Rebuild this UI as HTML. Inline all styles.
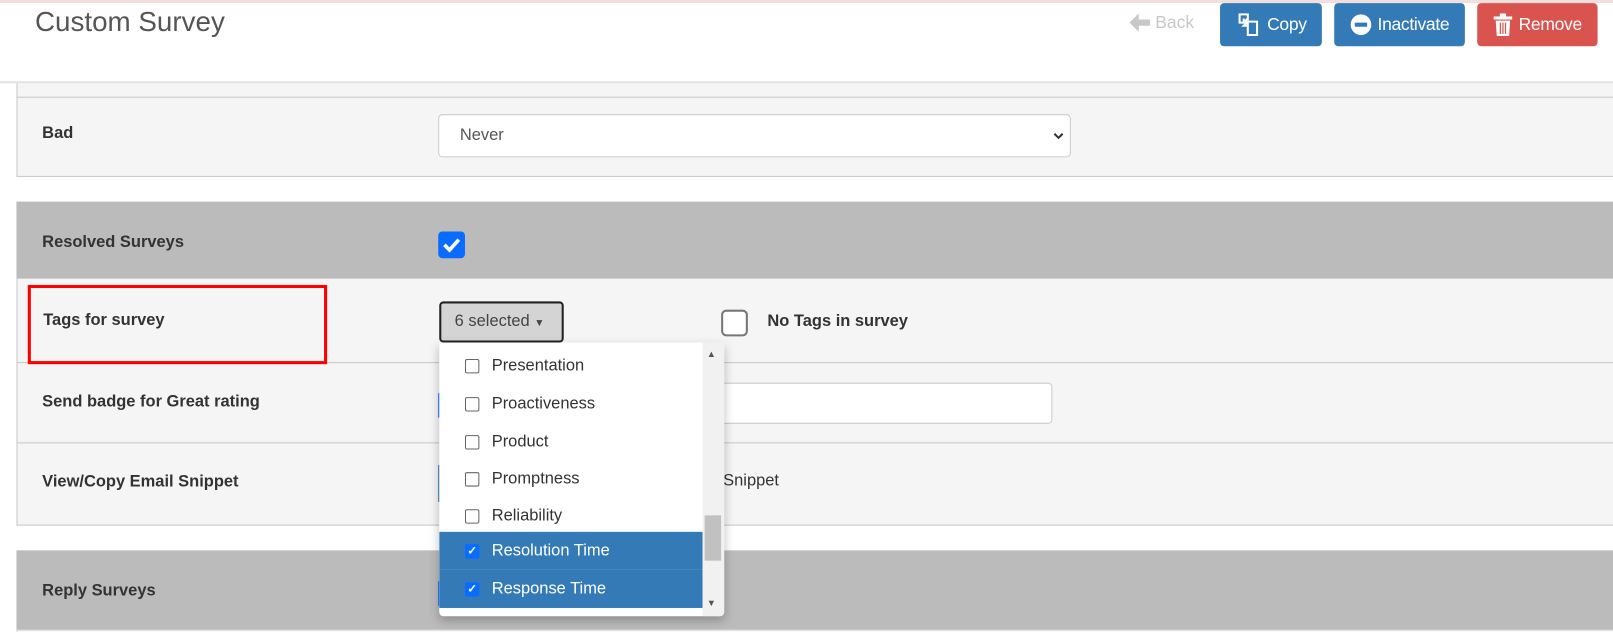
<!DOCTYPE html>
<html><head><style>
*{box-sizing:border-box;margin:0;padding:0}
html,body{width:1613px;height:632px;overflow:hidden;background:#fff}
#w{position:absolute;left:0;top:0;width:1568px;height:614px;transform:scale(1.0287);transform-origin:0 0;font-family:"Liberation Sans",Arial,sans-serif;color:#333;overflow:hidden}
.abs{position:absolute}
.lbl{position:absolute;left:41px;font-weight:bold;font-size:16px;color:#333}
.btn{position:absolute;top:3px;height:42px;border-radius:4px;color:#fff;font-size:17px;display:flex;align-items:center;justify-content:center;gap:5px;letter-spacing:-0.3px}
.item{position:absolute;left:0;width:256px;height:37px;font-size:16px;display:flex;align-items:center;padding-left:25px;color:#333}
.cb{width:14px;height:14px;border:1px solid #666;border-radius:2px;background:#fff;margin-right:12px}
.sel{background:#337ab7;color:#fff}
.sel .cb{background:#0a6cff;border-color:#0a6cff;color:#fff;font-size:11px;line-height:12px;text-align:center;font-weight:bold}
</style></head><body><div id="w">
<div class="abs" style="left:0;top:0;width:1568px;height:3px;background:#f3dede"></div>
<div class="abs" style="left:0;top:79px;width:1568px;height:2px;background:#e2e2e2"></div>
<div class="abs" style="left:34px;top:6px;font-size:27px;color:#555">Custom Survey</div>
<div class="abs" style="left:1097px;top:12px;font-size:17px;color:#c8c8c8;display:flex;align-items:center;gap:4px"><svg width="22" height="20" viewBox="0 0 22 20"><path d="M10 1 L1 10 L10 19 L10 13 L21 13 L21 7 L10 7 Z" fill="#c8c8c8"/></svg>Back</div>
<div class="btn" style="left:1186px;width:99px;background:#337ab7"><svg width="26" height="24" viewBox="0 0 26 24" fill="none" stroke="#fff" stroke-width="2"><path d="M4 2h8v4l-4 4H4z M8 6v4H4"/><path d="M12 9h9v13H12zM12 9l-4 4h4z"/></svg>Copy</div>
<div class="btn" style="left:1297px;width:127px;background:#337ab7"><svg width="22" height="22" viewBox="0 0 22 22"><circle cx="11" cy="11" r="10" fill="#fff"/><rect x="5" y="9" width="12" height="4" fill="#337ab7"/></svg>Inactivate</div>
<div class="btn" style="left:1436px;width:117px;background:#d9534f"><svg width="20" height="22" viewBox="0 0 20 22"><rect x="1" y="3" width="18" height="3" fill="#fff"/><rect x="7" y="0" width="6" height="3" fill="#fff"/><path d="M3 7h14l-1 15H4z" fill="#fff"/><path d="M7.5 9v11M10 9v11M12.5 9v11" stroke="#d9534f" stroke-width="1.2"/></svg>Remove</div>

<div class="abs" style="left:16px;top:81px;width:1560px;height:91px;background:#f5f5f5;border-left:1px solid #c8c8c8;border-bottom:1px solid #c8c8c8"></div>
<div class="abs" style="left:16px;top:94px;width:1560px;height:1px;background:#c8c8c8"></div>
<div class="lbl" style="top:121px">Bad</div>
<div class="abs" style="left:426px;top:111px;width:615px;height:42px;background:#fff;border:1px solid #ccc;border-radius:4px;font-size:16px;padding:11px 20px;color:#555">Never<svg class="abs" style="right:5px;top:15px" width="12" height="10" viewBox="0 0 12 10"><path d="M2 3l4 4 4-4" stroke="#333" stroke-width="2" fill="none"/></svg></div>

<div class="abs" style="left:16px;top:196px;width:1560px;height:75px;background:#bbb"></div>
<div class="lbl" style="top:227px">Resolved Surveys</div>
<div class="abs" style="left:426px;top:225px;width:26px;height:26px;background:#0a6cff;border-radius:4px"><svg width="26" height="26" viewBox="0 0 26 26"><path d="M6 13l5 5 9-10" stroke="#fff" stroke-width="3.5" fill="none"/></svg></div>
<div class="abs" style="left:16px;top:271px;width:1560px;height:240px;background:#f5f5f5;border-left:1px solid #c8c8c8;border-bottom:1px solid #c8c8c8"></div>
<div class="abs" style="left:16px;top:352px;width:1560px;height:1px;background:#c8c8c8"></div>
<div class="abs" style="left:16px;top:430px;width:1560px;height:1px;background:#c8c8c8"></div>
<div class="abs" style="left:27px;top:277px;width:291px;height:77px;border:3px solid #f00"></div>
<div class="lbl" style="top:303px;left:42px">Tags for survey</div>
<div class="abs" style="left:427px;top:293px;width:121px;height:40px;background:#d4d4d4;border:2px solid #222;border-radius:4px;font-size:16px;color:#444;padding:9px 0 0 13px">6 selected <span style="font-size:10px">▼</span></div>
<div class="abs" style="left:701px;top:301px;width:26px;height:26px;border:2px solid #777;border-radius:5px;background:#fff"></div>
<div class="abs" style="left:746px;top:304px;font-size:16px;font-weight:bold">No Tags in survey</div>
<div class="lbl" style="top:382px">Send badge for Great rating</div>
<div class="abs" style="left:426px;top:382px;width:3px;height:24px;background:#0a6cff"></div>
<div class="abs" style="left:690px;top:372px;width:333px;height:40px;background:#fff;border:1px solid #ccc;border-radius:4px"></div>
<div class="lbl" style="top:460px">View/Copy Email Snippet</div>
<div class="abs" style="left:426px;top:452px;width:3px;height:36px;background:#337ab7"></div>
<div class="abs" style="left:703px;top:459px;font-size:16px">Snippet</div>

<div class="abs" style="left:16px;top:535px;width:1560px;height:77px;background:#bbb"></div>
<div class="abs" style="left:16px;top:612px;width:1560px;height:1px;background:#d0d0d0"></div>
<div class="abs" style="left:16px;top:613px;width:1560px;height:19px;background:#f5f5f5;border-left:1px solid #c8c8c8"></div>
<div class="lbl" style="top:566px">Reply Surveys</div>
<div class="abs" style="left:426px;top:565px;width:3px;height:24px;background:#0a6cff"></div>

<div class="abs" style="left:427px;top:333px;width:277px;height:266px;background:#fff;border-radius:0 0 4px 4px;box-shadow:0 4px 10px rgba(0,0,0,.25);overflow:hidden">
<div class="item" style="top:4px"><span class="cb"></span>Presentation</div>
<div class="item" style="top:41px"><span class="cb"></span>Proactiveness</div>
<div class="item" style="top:78px"><span class="cb"></span>Product</div>
<div class="item" style="top:114px"><span class="cb"></span>Promptness</div>
<div class="item" style="top:150px"><span class="cb"></span>Reliability</div>
<div class="item sel" style="top:184px"><span class="cb">✓</span>Resolution Time</div>
<div class="item sel" style="top:221px"><span class="cb">✓</span>Response Time</div>
<div class="abs" style="left:256px;top:0;width:21px;height:266px;background:#f1f1f1"></div>
<div class="abs" style="left:258px;top:168px;width:16px;height:44px;background:#c1c1c1"></div>
<div class="abs" style="left:260px;top:6px;font-size:9px;color:#555">▲</div>
<div class="abs" style="left:260px;top:248px;font-size:9px;color:#555">▼</div>
</div>
</div></body></html>
